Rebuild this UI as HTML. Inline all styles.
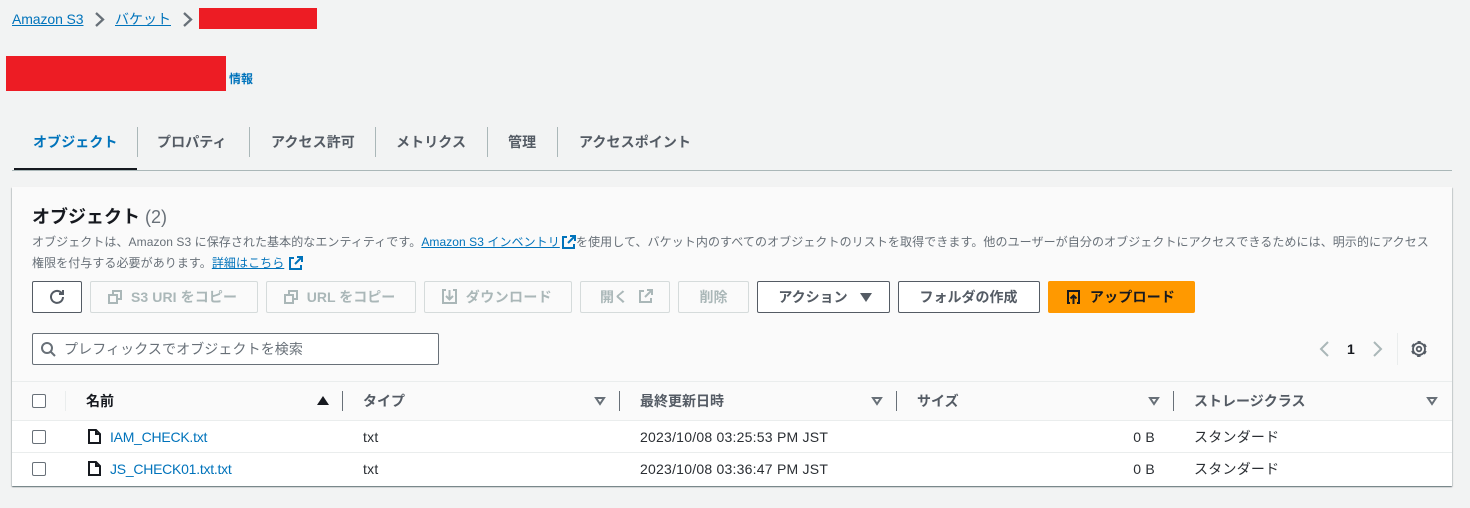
<!DOCTYPE html>
<html lang="ja"><head><meta charset="utf-8">
<style>
html,body{margin:0;padding:0;width:1470px;height:508px;overflow:hidden;background:#f2f3f3}
body{position:relative;font-family:"Liberation Sans","Noto Sans CJK JP",sans-serif;font-size:14px;color:#16191f}
.t{position:absolute;white-space:nowrap;line-height:20px}
.b{position:absolute;box-sizing:border-box}
a,.l{color:#0073bb}
.u{text-decoration:underline}
.tab{font-weight:700;color:#545b64;letter-spacing:.1px}
.sep{position:absolute;width:1px;background:#aab7b8}
.btn{position:absolute;box-sizing:border-box;height:32px;top:281px;border:1px solid #545b64;border-radius:2px;background:#fff;font-weight:700;color:#545b64;text-align:center;line-height:30px;white-space:nowrap}
.dis{border-color:#d5dbdb;background:#fafafa;color:#aab7b8}
.cb{position:absolute;box-sizing:border-box;width:14px;height:14px;left:32px;border:1px solid #687078;border-radius:2px;background:#fff}
svg{position:absolute;overflow:visible}
.th{font-weight:700;color:#545b64;top:391px}
.hsep{position:absolute;top:391px;height:20px;width:1px;background:#687078}
.fn{letter-spacing:-.25px}
.dt{letter-spacing:.23px;color:#2a2e33}
.d{font-size:12px;color:#687078;letter-spacing:.07px}
</style></head><body>

<span class="t l u" style="left:12px;top:9px;font-size:14px;letter-spacing:-.1px">Amazon S3</span>
<svg style="left:95px;top:12px" width="10" height="15" fill="none" stroke="#687078" stroke-width="2.300"><path d="M1 1l7 6.500-7 6.500"/></svg>
<span class="t l u" style="left:115px;top:9px;font-size:14px">バケット</span>
<svg style="left:183px;top:12px" width="10" height="15" fill="none" stroke="#687078" stroke-width="2.300"><path d="M1 1l7 6.500-7 6.500"/></svg>
<div class="b" style="left:199px;top:8px;width:118px;height:21px;background:#ed1c24"></div>
<div class="b" style="left:6px;top:56px;width:220px;height:35px;background:#ed1c24"></div>
<span class="t l" style="left:229px;top:69px;font-size:12px;font-weight:700">情報</span>

<span class="t tab" style="left:33px;top:132px;color:#0073bb">オブジェクト</span>
<span class="t tab" style="left:157px;top:132px">プロパティ</span>
<span class="t tab" style="left:271px;top:132px">アクセス許可</span>
<span class="t tab" style="left:396px;top:132px">メトリクス</span>
<span class="t tab" style="left:508px;top:132px">管理</span>
<span class="t tab" style="left:579px;top:132px">アクセスポイント</span>
<div class="sep" style="left:137px;top:127px;height:30px"></div>
<div class="sep" style="left:249px;top:127px;height:30px"></div>
<div class="sep" style="left:375px;top:127px;height:30px"></div>
<div class="sep" style="left:487px;top:127px;height:30px"></div>
<div class="sep" style="left:557px;top:127px;height:30px"></div>
<div class="b" style="left:12px;top:170px;width:1440px;height:1px;background:#aab7b8"></div>
<div class="b" style="left:14px;top:168px;width:123px;height:2px;background:#16191f"></div>

<div class="b" style="left:12px;top:187px;width:1440px;height:299px;background:#fff;box-shadow:0 1px 1px 0 rgba(0,28,36,.5),1px 1px 1px 0 rgba(0,28,36,.1),-1px 1px 1px 0 rgba(0,28,36,.1)"></div>
<div class="b" style="left:12px;top:187px;width:1440px;height:234px;background:#fafafa;border-bottom:1px solid #eaeded"></div>

<span class="t" style="left:32px;top:207px;font-size:18px;font-weight:700">オブジェクト <span style="font-weight:400;color:#687078">(2)</span></span>
<span class="t d" style="left:32px;top:232px">オブジェクトは、Amazon S3 に保存された基本的なエンティティです。<span class="l u">Amazon S3 インベントリ </span></span>
<svg style="left:561px;top:235px" width="15" height="15" fill="none" stroke="#0073bb" stroke-width="2"><path d="M6 2H2v11h11V9M9 1h5v5M14 1L7 8"/></svg>
<span class="t d" style="left:576px;top:232px;letter-spacing:.085px">を使用して、バケット内のすべてのオブジェクトのリストを取得できます。他のユーザーが自分のオブジェクトにアクセスできるためには、明示的にアクセス</span>
<span class="t d" style="left:32px;top:253px">権限を付与する必要があります。<span class="l u">詳細はこちら </span></span>
<svg style="left:288px;top:256px" width="15" height="15" fill="none" stroke="#0073bb" stroke-width="2"><path d="M6 2H2v11h11V9M9 1h5v5M14 1L7 8"/></svg>

<div class="btn" style="left:32px;width:50px"></div>
<svg style="left:49px;top:289px" width="16" height="16" fill="none" stroke="#545b64" stroke-width="2"><path d="M14 8a6 6 0 1 1-2-4.600L14 5M14 1v4h-4"/></svg>

<div class="btn dis" style="left:90px;width:168px;padding-left:20px;letter-spacing:.1px">S3 URI をコピー</div>
<svg style="left:108px;top:290px" width="14" height="14" fill="none" stroke="#aab7b8" stroke-width="2"><path d="M1 5h8v8H1zM5 5V1h8v8H9"/></svg>
<div class="btn dis" style="left:266px;width:150px;padding-left:20px">URL をコピー</div>
<svg style="left:284px;top:290px" width="14" height="14" fill="none" stroke="#aab7b8" stroke-width="2"><path d="M1 5h8v8H1zM5 5V1h8v8H9"/></svg>
<div class="btn dis" style="left:424px;width:148px;padding-left:22px;letter-spacing:.4px">ダウンロード</div>
<svg style="left:442px;top:289px" width="14" height="14" fill="none" stroke="#aab7b8" stroke-width="2"><path d="M4 1H1v13h13V1h-3M7.500 1v9M4 7l3.500 3.500L11 7"/></svg>
<div class="btn dis" style="left:580px;width:90px;padding-right:22px">開く</div>
<svg style="left:638px;top:289px" width="15" height="15" fill="none" stroke="#aab7b8" stroke-width="2"><path d="M6 2H2v11h11V9M9 1h5v5M14 1L7 8"/></svg>
<div class="btn dis" style="left:678px;width:71px">削除</div>
<div class="btn" style="left:757px;width:133px;padding-right:21px">アクション</div>
<svg style="left:860px;top:293px" width="12" height="9"><path d="M0 0h12L6 9z" fill="#545b64"/></svg>
<div class="btn" style="left:898px;width:142px;padding-right:1px">フォルダの作成</div>
<div class="btn" style="left:1048px;width:147px;background:#f90;border-color:#f90;color:#16191f;padding-left:22px;letter-spacing:.2px">アップロード</div>
<svg style="left:1067px;top:290px" width="13" height="14" fill="none" stroke="#16191f" stroke-width="2"><path d="M3 13H1V1h11v12h-2M6.500 14V6M3.500 8.500l3-3 3 3"/></svg>

<div class="b" style="left:32px;top:333px;width:407px;height:32px;background:#fff;border:1px solid #687078;border-radius:2px"></div>
<svg style="left:41px;top:342px" width="14" height="14" fill="none" stroke="#687078" stroke-width="2"><circle cx="6" cy="6" r="5"/><path d="M10 10l4 4"/></svg>
<span class="t" style="left:64px;top:339px;color:#687078;letter-spacing:.1px">プレフィックスでオブジェクトを検索</span>

<svg style="left:1318px;top:341px" width="12" height="16" fill="none" stroke="#aab7b8" stroke-width="2"><path d="M10 1L3 8l7 7"/></svg>
<span class="t" style="left:1347px;top:339px;font-weight:700;color:#16191f">1</span>
<svg style="left:1372px;top:341px" width="12" height="16" fill="none" stroke="#aab7b8" stroke-width="2"><path d="M2 1l7 7-7 7"/></svg>
<div class="b" style="left:1397px;top:333px;width:1px;height:32px;background:#eaeded"></div>
<svg style="left:1411px;top:341px" width="16" height="16" fill="none" stroke="#545b64"><circle cx="8" cy="8" r="2.300" stroke-width="1.800"/><circle cx="8" cy="8" r="6" stroke-width="1.800"/><circle cx="8" cy="8" r="7.200" stroke-width="1.600" stroke-dasharray="3.500 4.040" stroke-dashoffset="1.750" transform="rotate(-90 8 8)"/></svg>

<div class="b" style="left:12px;top:381px;width:1440px;height:1px;background:#eaeded"></div>
<div class="cb" style="top:394px"></div>
<div class="b" style="left:65px;top:391px;width:1px;height:20px;background:#eaeded"></div>
<span class="t th" style="left:86px;color:#16191f">名前</span>
<svg style="left:317px;top:396px" width="12" height="9"><path d="M6 0l6 9H0z" fill="#16191f"/></svg>
<div class="hsep" style="left:342px"></div>
<span class="t th" style="left:363px">タイプ</span>
<svg style="left:595px;top:397px" width="10" height="8" fill="none" stroke="#687078" stroke-width="2"><path d="M1 1h8L5 7z"/></svg>
<div class="hsep" style="left:619px"></div>
<span class="t th" style="left:640px">最終更新日時</span>
<svg style="left:872px;top:397px" width="10" height="8" fill="none" stroke="#687078" stroke-width="2"><path d="M1 1h8L5 7z"/></svg>
<div class="hsep" style="left:896px"></div>
<span class="t th" style="left:917px">サイズ</span>
<svg style="left:1149px;top:397px" width="10" height="8" fill="none" stroke="#687078" stroke-width="2"><path d="M1 1h8L5 7z"/></svg>
<div class="hsep" style="left:1173px"></div>
<span class="t th" style="left:1194px">ストレージクラス</span>
<svg style="left:1427px;top:397px" width="10" height="8" fill="none" stroke="#687078" stroke-width="2"><path d="M1 1h8L5 7z"/></svg>

<div class="cb" style="top:430px"></div>
<svg style="left:88px;top:429px" width="13" height="16" fill="none" stroke="#16191f" stroke-width="2"><path d="M1 1h7l4 4v9H1zM8 1v4h4"/></svg>
<span class="t l fn" style="left:110px;top:427px">IAM_CHECK.txt</span>
<span class="t dt" style="left:363px;top:427px">txt</span>
<span class="t dt" style="left:640px;top:427px">2023/10/08 03:25:53 PM JST</span>
<span class="t dt" style="right:315px;top:427px">0 B</span>
<span class="t dt" style="left:1194px;top:427px">スタンダード</span>
<div class="b" style="left:12px;top:452px;width:1440px;height:1px;background:#eaeded"></div>
<div class="cb" style="top:462px"></div>
<svg style="left:88px;top:461px" width="13" height="16" fill="none" stroke="#16191f" stroke-width="2"><path d="M1 1h7l4 4v9H1zM8 1v4h4"/></svg>
<span class="t l fn" style="left:110px;top:459px">JS_CHECK01.txt.txt</span>
<span class="t dt" style="left:363px;top:459px">txt</span>
<span class="t dt" style="left:640px;top:459px">2023/10/08 03:36:47 PM JST</span>
<span class="t dt" style="right:315px;top:459px">0 B</span>
<span class="t dt" style="left:1194px;top:459px">スタンダード</span>

</body></html>
